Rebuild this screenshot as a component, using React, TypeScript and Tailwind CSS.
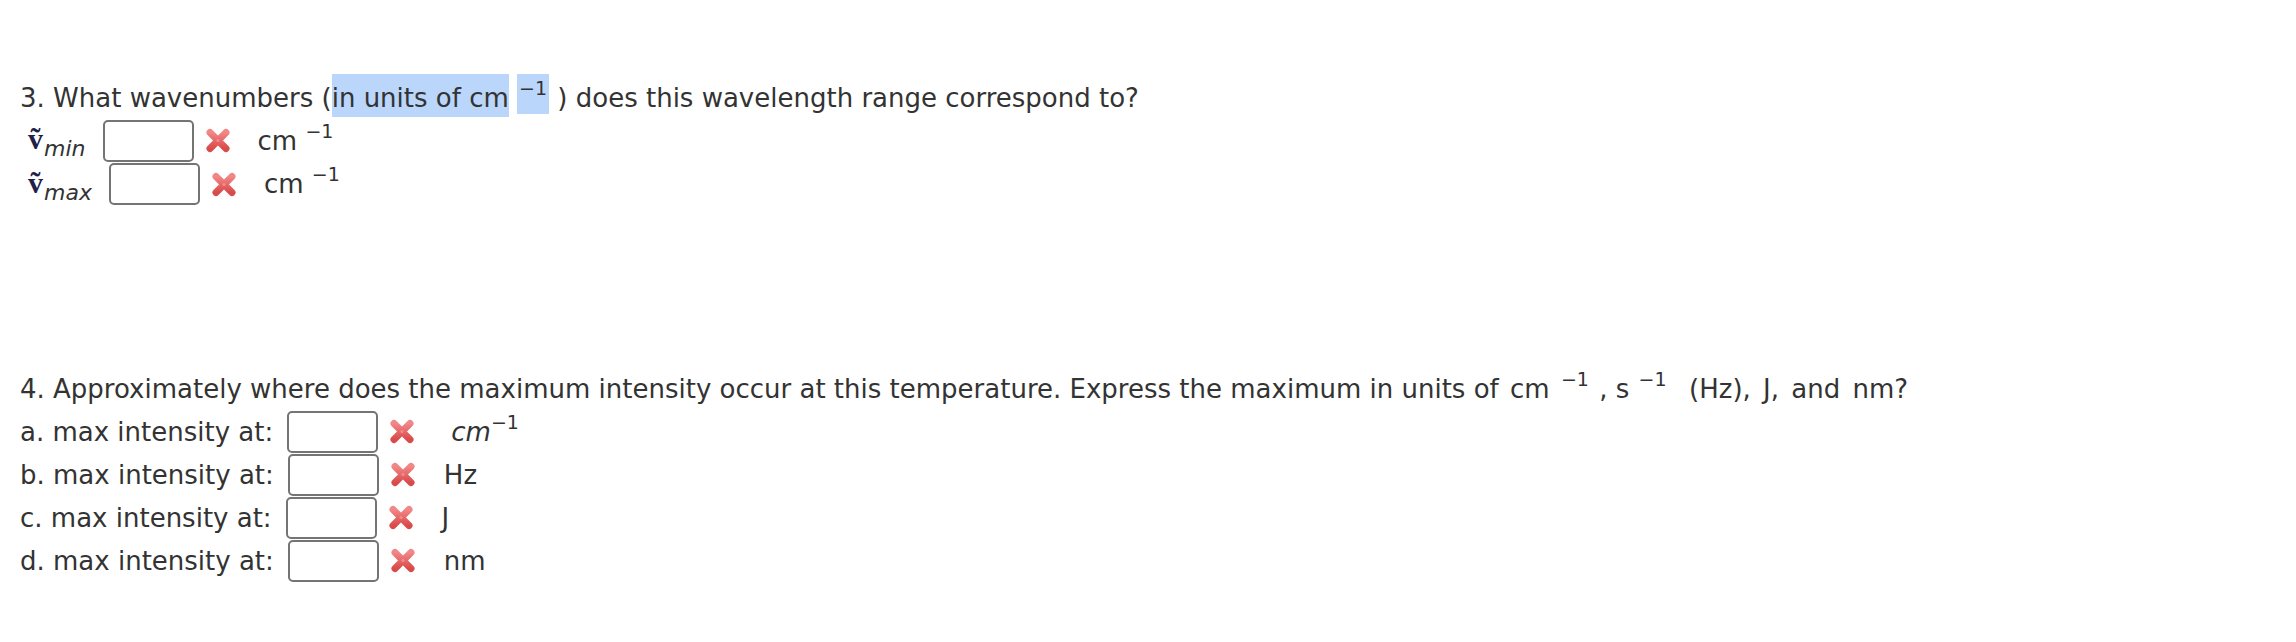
import React from "react";

const XMark = () => (
  <svg width="26" height="25" viewBox="0 0 26 25" className="shrink-0">
    <defs>
      <linearGradient id="xgrad" x1="0" y1="0" x2="0" y2="1">
        <stop offset="0" stopColor="#f28787" />
        <stop offset="1" stopColor="#d94a4a" />
      </linearGradient>
    </defs>
    <path
      d="M5 4.5 L21 20.5 M21 4.5 L5 20.5"
      stroke="url(#xgrad)"
      strokeWidth="7"
      strokeLinecap="round"
      fill="none"
    />
    <circle cx="13" cy="12.5" r="1.6" fill="#f59a9a" opacity="0.7" />
  </svg>
);

const Box = ({ ml }: { ml: string }) => (
  <input
    type="text"
    className={`${ml} box-border w-[91px] h-[42px] shrink-0 rounded-[5px] border-2 border-[#747474] bg-white outline-none`}
  />
);

const Sup = ({ className = "" }: { className?: string }) => (
  <sup className={`text-[19px] top-[-12px] ${className}`}>−1</sup>
);

const Nu = ({ sub }: { sub: string }) => (
  <span className="flex items-baseline">
    <span className="ml-[8px] font-['Liberation_Serif',serif] font-bold text-[30px] leading-[30px] text-[#1f1f48]">
      ṽ
    </span>
    <span className="relative top-[7px] ml-[1px] italic text-[22px] leading-[30px]">{sub}</span>
  </span>
);

const Row = ({ label, ml, unit, unitMl }: { label: string; ml: string; unit: React.ReactNode; unitMl: string }) => (
  <div className="flex items-center h-[43px]">
    <span className="leading-[30px] whitespace-pre">{label}</span>
    <Box ml={ml} />
    <span className="ml-[11px] flex">
      <XMark />
    </span>
    <span className={`${unitMl} leading-[30px] whitespace-pre`}>{unit}</span>
  </div>
);

export default function App() {
  return (
    <div className="w-full h-[642px] bg-white font-['DejaVu_Sans',sans-serif] text-[26px] text-[#333333] pl-[20px] pt-[83px]">
      <div className="h-[30px] leading-[30px] whitespace-pre">
        3. What wavenumbers (
        <span className="bg-[#bbd6fb] pt-[9px] pb-[4px]">in units of cm</span>{" "}
        <span className="bg-[#bbd6fb] pt-[9px] pb-[1px] px-[2px]">
          <Sup />
        </span>{" "}
        ) does this wavelength range correspond to?
      </div>

      <div className="mt-[6px] flex items-center h-[43px]">
        <Nu sub="min" />
        <Box ml="ml-[17px]" />
        <span className="ml-[11px] flex">
          <XMark />
        </span>
        <span className="ml-[27px] leading-[30px] whitespace-pre">
          cm <Sup />
        </span>
      </div>
      <div className="flex items-center h-[44px]">
        <Nu sub="max" />
        <Box ml="ml-[17px]" />
        <span className="ml-[11px] flex">
          <XMark />
        </span>
        <span className="ml-[27px] leading-[30px] whitespace-pre">
          cm <Sup />
        </span>
      </div>

      <div className="mt-[168px] h-[30px] leading-[30px] whitespace-pre">
        4. Approximately where does the maximum intensity occur at this temperature. Express the maximum in units of{" "}
        <span className="ml-[3px]">cm</span> <Sup className="ml-[3px] mr-[2px]" /> , s{" "}
        <Sup className="ml-[1px] mr-[6px]" />
        {"\u00a0 "}
        <span className="[word-spacing:4px]">(Hz), J, and nm?</span>
      </div>

      <div className="mt-[6px]">
        <Row
          label="a. max intensity at:"
          ml="ml-[14px]"
          unitMl="ml-[36px]"
          unit={
            <>
              <span className="italic">cm</span>
              <Sup />
            </>
          }
        />
        <Row label="b. max intensity at:" ml="ml-[14px]" unitMl="ml-[28px]" unit="Hz" />
        <Row label="c. max intensity at:" ml="ml-[14px]" unitMl="ml-[28px]" unit="J" />
        <Row label="d. max intensity at:" ml="ml-[14px]" unitMl="ml-[28px]" unit="nm" />
      </div>
    </div>
  );
}
